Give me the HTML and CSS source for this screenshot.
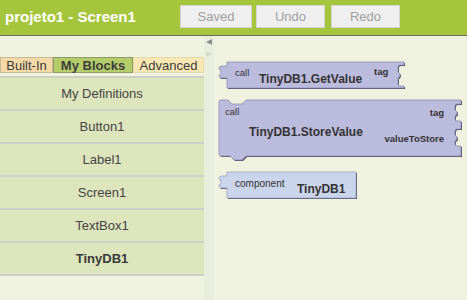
FILE: index.html
```html
<!DOCTYPE html>
<html>
<head>
    <title>projeto1 - Screen1</title>
    <link rel="stylesheet" href="styles.css">
</head>
<body>
    <header class="topbar">
        <div class="title">projeto1 - Screen1</div>
        <div class="actions">
            <button class="btn btn-saved">Saved</button>
            <button class="btn btn-undo">Undo</button>
            <button class="btn btn-redo">Redo</button>
        </div>
    </header>

    <div class="main">
        <aside class="drawer">
            <div class="tabs">
                <span class="tab tab-builtin">Built-In</span>
                <span class="tab tab-mine">My Blocks</span>
                <span class="tab tab-advanced">Advanced</span>
            </div>
            <ul class="drawer-list">
                <li>My Definitions</li>
                <li>Button1</li>
                <li>Label1</li>
                <li>Screen1</li>
                <li>TextBox1</li>
                <li class="selected">TinyDB1</li>
            </ul>
        </aside>

        <div class="splitter">
            <span class="arrow arrow-left"></span>
            <span class="arrow arrow-right"></span>
        </div>

        <div class="workspace">
            <!-- blocks canvas, drawn in page coordinates -->
            <svg class="canvas" width="253" height="264" viewBox="214 36 253 264">
                <g class="block">
                    <path class="shade" transform="translate(1,1)" d="M227,62 H404 V65 H400 Q398,65 398,67 V72 Q400,73 400,75 Q400,77 398,78 V84 Q398,86 400,86 H404 V88 H227 V78 H222 Q219,78 219,76 V75 Q221,74 221,72 Q221,70 219,69 V68 Q219,66 222,66 H227 Z"/>
                    <path class="body" d="M227,62 H404 V65 H400 Q398,65 398,67 V72 Q400,73 400,75 Q400,77 398,78 V84 Q398,86 400,86 H404 V88 H227 V78 H222 Q219,78 219,76 V75 Q221,74 221,72 Q221,70 219,69 V68 Q219,66 222,66 H227 Z"/>
                    <text class="small" x="235" y="76">call</text>
                    <text class="name" x="259" y="83">TinyDB1.GetValue</text>
                    <text class="label" x="374" y="75">tag</text>
                </g>

                <g class="block">
                    <path class="shade" transform="translate(1,1)" d="M221,100 H228 L232,104 H242 L246,100 H461 V104 H457 Q455,104 455,106 V110 Q457,111 457,113 Q457,115 455,116 V119 Q455,121 457,121 H461 V129 H457 Q455,129 455,131 V135 Q457,136 457,138 Q457,140 455,141 V144 Q455,146 457,146 H461 V156 H246 L242,160 H234 L230,156 H221 Q219,156 219,154 V102 Q219,100 221,100 Z"/>
                    <path class="body" d="M221,100 H228 L232,104 H242 L246,100 H461 V104 H457 Q455,104 455,106 V110 Q457,111 457,113 Q457,115 455,116 V119 Q455,121 457,121 H461 V129 H457 Q455,129 455,131 V135 Q457,136 457,138 Q457,140 455,141 V144 Q455,146 457,146 H461 V156 H246 L242,160 H234 L230,156 H221 Q219,156 219,154 V102 Q219,100 221,100 Z"/>
                    <text class="small" x="225" y="115">call</text>
                    <text class="name" x="249" y="136">TinyDB1.StoreValue</text>
                    <text class="label" x="444" y="116" text-anchor="end">tag</text>
                    <text class="label" x="444" y="142" text-anchor="end">valueToStore</text>
                </g>

                <g class="block component">
                    <path class="shade" transform="translate(1,1)" d="M227,172 H356 V198 H227 V188 H222 Q219,188 219,186 V185 Q221,184 221,182 Q221,180 219,179 V178 Q219,176 222,176 H227 Z"/>
                    <path class="body" d="M227,172 H356 V198 H227 V188 H222 Q219,188 219,186 V185 Q221,184 221,182 Q221,180 219,179 V178 Q219,176 222,176 H227 Z"/>
                    <text class="comp" x="235" y="187">component</text>
                    <text class="name" x="297" y="193">TinyDB1</text>
                </g>
            </svg>
        </div>
    </div>
</body>
</html>
```

FILE: styles.css
```css
body {
    margin: 0;
    background: #eef2df;
    font-family: "Liberation Sans", Arial, sans-serif;
    overflow: hidden;
}
.topbar {
    display: flex;
    align-items: center;
    height: 35px;
    background: #a5c63c;
    border-bottom: 1px solid #6b6b5a;
}
.title {
    width: 175px;
    padding-left: 5px;
    color: #fff;
    font-weight: bold;
    font-size: 15px;
    margin-top: -2px;
}
.actions {
    display: flex;
    gap: 4px;
    margin-top: -3px;
}
.btn {
    height: 23px;
    background: #efefef;
    border: 1px solid #d4d4d4;
    color: #a0a0a0;
    font-family: "Liberation Sans", Arial, sans-serif;
    font-size: 13px;
    padding: 0;
}
.btn-saved {
    width: 72px;
}
.btn-undo {
    width: 69px;
}
.btn-redo {
    width: 69px;
    margin-left: 2px;
}
.main {
    display: flex;
    height: 264px;
}
.drawer {
    width: 204px;
    padding-top: 21px;
}
.tabs {
    display: flex;
    height: 16px;
    margin-bottom: 3px;
}
.tab {
    display: flex;
    align-items: center;
    justify-content: center;
    box-sizing: border-box;
    height: 16px;
    font-size: 13px;
    color: #3c3c3c;
    border: 1px solid #c9b994;
}
.tab-builtin {
    width: 53px;
    background: #f6d9a8;
}
.tab-mine {
    width: 80px;
    background: #b4cd69;
    border-color: #8d9a6a;
    font-weight: bold;
}
.tab-advanced {
    width: 71px;
    background: #f9e8b4;
    border-color: #e6d8a8;
}
.drawer-list {
    list-style: none;
    margin: 0;
    padding: 0;
    border-top: 2px solid #cdcfc5;
}
.drawer-list li {
    height: 31px;
    line-height: 31px;
    text-align: center;
    font-size: 13px;
    color: #444;
    background: #dde5bc;
    border-bottom: 2px solid #cfd0cc;
}
.drawer-list li.selected {
    font-weight: bold;
    color: #3a3a3a;
}
.splitter {
    width: 10px;
    background: #e9eddb;
    display: flex;
    flex-direction: column;
    align-items: center;
    padding-top: 3px;
    gap: 6px;
}
.arrow {
    width: 0;
    height: 0;
    border-top: 3px solid transparent;
    border-bottom: 3px solid transparent;
}
.arrow-left {
    border-right: 6px solid #8c8c8c;
}
.arrow-right {
    border-left: 6px solid #d6dac8;
}
.workspace {
    flex: 1;
}
.canvas {
    display: block;
}
.block .shade {
    fill: #4a4a62;
}
.block .body {
    fill: #bbbbdd;
    stroke: #8e8eb2;
    stroke-width: 0.8;
}
.block.component .body {
    fill: #cad4ea;
    stroke: #98a4c0;
}
.block text {
    font-family: "Liberation Sans", Arial, sans-serif;
    fill: #333;
}
.block .small {
    font-size: 9.5px;
}
.block .name {
    font-size: 12px;
    font-weight: bold;
}
.block .label {
    font-size: 9.5px;
    font-weight: bold;
}
.block .comp {
    font-size: 10px;
}
```
